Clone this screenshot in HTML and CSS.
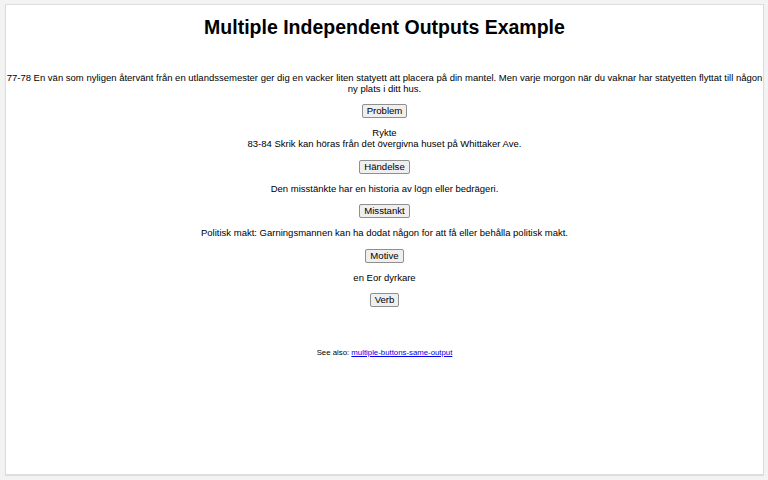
FILE: index.html
```html
<!DOCTYPE html>
<html lang="sv">
<head>
<meta charset="utf-8">
<title>Multiple Independent Outputs Example</title>
<link rel="stylesheet" href="styles.css">
</head>
<body>
<main class="page">
  <h1 class="title">Multiple Independent Outputs Example</h1>
  <section class="outputs">
    <p class="output">77-78 En vän som nyligen återvänt från en utlandssemester ger dig en vacker liten statyett att placera på din mantel. Men varje morgon när du vaknar har statyetten flyttat till någon ny plats i ditt hus.</p>
    <button class="btn" type="button">Problem</button>
    <p class="output">Rykte<br>83-84 Skrik kan höras från det övergivna huset på Whittaker Ave.</p>
    <button class="btn" type="button">Händelse</button>
    <p class="output">Den misstänkte har en historia av lögn eller bedrägeri.</p>
    <button class="btn" type="button">Misstankt</button>
    <p class="output">Politisk makt: Garningsmannen kan ha dodat någon for att få eller behålla politisk makt.</p>
    <button class="btn" type="button">Motive</button>
    <p class="output">en Eor dyrkare</p>
    <button class="btn" type="button">Verb</button>
  </section>
  <p class="see-also">See also: <a href="#">multiple-buttons-same-output</a></p>
</main>
</body>
</html>
```

FILE: styles.css
```css
html, body {
  margin: 0;
  padding: 0;
}

body {
  background: #f3f3f3;
  padding: 4px 4px 4px 5px;
  font-family: "Liberation Sans", Arial, sans-serif;
  color: #000;
}

.page {
  box-sizing: border-box;
  height: 471px;
  background: #fff;
  border: 1px solid #dcdcdc;
  box-shadow: 0 1px 1px rgba(0, 0, 0, 0.08);
  text-align: center;
}

.title {
  margin: 11px 0 0;
  font-size: 19.5px;
  line-height: 23px;
  font-weight: bold;
}

.outputs {
  display: flex;
  flex-direction: column;
  align-items: center;
  gap: 9.15px;
  margin-top: 32.5px;
}

.output {
  margin: 0;
  font-size: 9.5px;
  line-height: 11.2px;
}

.btn {
  box-sizing: border-box;
  height: 14px;
  margin: 1px 0 0;
  padding: 0 4px;
  font-family: "Liberation Sans", Arial, sans-serif;
  font-size: 9.6px;
  line-height: 12px;
  color: #000;
  background: #efefef;
  border: 1px solid #8f8f8f;
  border-radius: 2px;
}

.see-also {
  margin: 40.5px 0 0;
  font-size: 7.8px;
  line-height: 9px;
}

.see-also a {
  color: #0000ee;
}
```
